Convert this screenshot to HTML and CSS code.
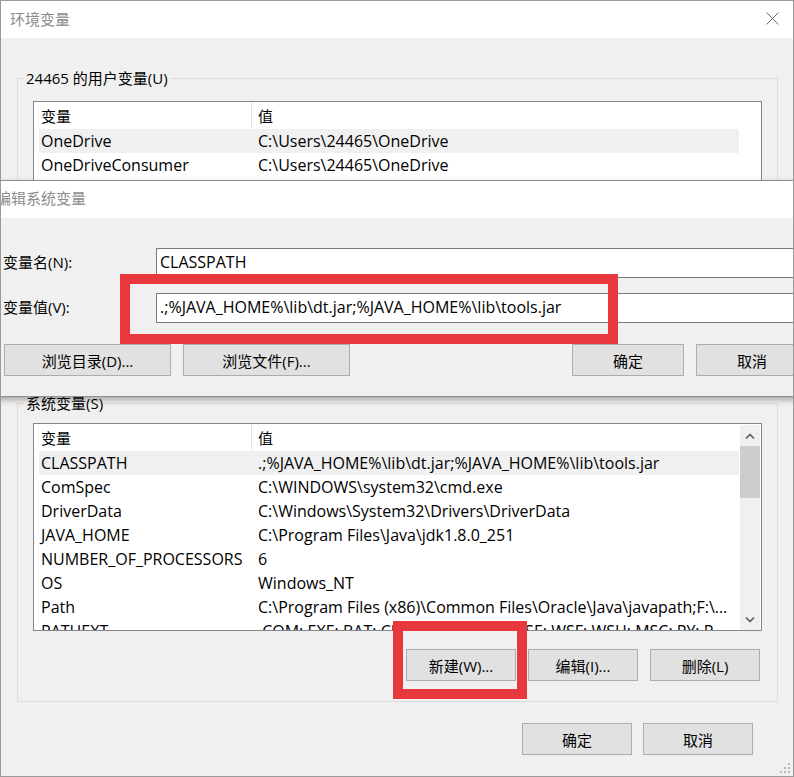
FILE: index.html
```html
<!DOCTYPE html>
<html lang="zh-CN">
<head>
    <meta charset="UTF-8">
    <title>环境变量</title>
    <link rel="stylesheet" href="styles.css">
</head>
<body>
    <div class="env-window">
        <!--标题栏-->
        <div class="title-bar">
            <span class="title">环境变量</span>
            <svg class="close-btn" width="13" height="13" viewBox="0 0 13 13">
                <path d="M0.5 0.5 L12.5 12.5 M12.5 0.5 L0.5 12.5" stroke="#6a6a6a" stroke-width="1" fill="none"/>
            </svg>
        </div>

        <div class="env-body">
            <!--用户变量-->
            <fieldset class="group user-group">
                <legend>24465 的用户变量(U)</legend>
                <div class="var-list user-list">
                    <div class="list-body">
                        <div class="list-head">
                            <span class="col-name">变量</span>
                            <span class="col-value">值</span>
                        </div>
                        <div class="list-row selected">
                            <span class="col-name">OneDrive</span>
                            <span class="col-value">C:\Users\24465\OneDrive</span>
                        </div>
                        <div class="list-row">
                            <span class="col-name">OneDriveConsumer</span>
                            <span class="col-value">C:\Users\24465\OneDrive</span>
                        </div>
                        <div class="list-row">
                            <span class="col-name">Path</span>
                            <span class="col-value">C:\Users\24465\AppData\Local\Microsoft\WindowsApps;</span>
                        </div>
                        <div class="list-row">
                            <span class="col-name">TEMP</span>
                            <span class="col-value">C:\Users\24465\AppData\Local\Temp</span>
                        </div>
                        <div class="list-row">
                            <span class="col-name">TMP</span>
                            <span class="col-value">C:\Users\24465\AppData\Local\Temp</span>
                        </div>
                    </div>
                </div>
                <div class="group-actions">
                    <button class="btn">新建(N)...</button>
                    <button class="btn">编辑(E)...</button>
                    <button class="btn">删除(D)</button>
                </div>
            </fieldset>

            <!--系统变量-->
            <fieldset class="group sys-group">
                <legend>系统变量(S)</legend>
                <div class="var-list sys-list">
                    <div class="list-body">
                        <div class="list-head">
                            <span class="col-name">变量</span>
                            <span class="col-value">值</span>
                        </div>
                        <div class="list-row selected">
                            <span class="col-name">CLASSPATH</span>
                            <span class="col-value">.;%JAVA_HOME%\lib\dt.jar;%JAVA_HOME%\lib\tools.jar</span>
                        </div>
                        <div class="list-row">
                            <span class="col-name">ComSpec</span>
                            <span class="col-value">C:\WINDOWS\system32\cmd.exe</span>
                        </div>
                        <div class="list-row">
                            <span class="col-name">DriverData</span>
                            <span class="col-value">C:\Windows\System32\Drivers\DriverData</span>
                        </div>
                        <div class="list-row">
                            <span class="col-name">JAVA_HOME</span>
                            <span class="col-value">C:\Program Files\Java\jdk1.8.0_251</span>
                        </div>
                        <div class="list-row">
                            <span class="col-name">NUMBER_OF_PROCESSORS</span>
                            <span class="col-value">6</span>
                        </div>
                        <div class="list-row">
                            <span class="col-name">OS</span>
                            <span class="col-value">Windows_NT</span>
                        </div>
                        <div class="list-row">
                            <span class="col-name">Path</span>
                            <span class="col-value">C:\Program Files (x86)\Common Files\Oracle\Java\javapath;F:\Python39\Scripts\</span>
                        </div>
                        <div class="list-row">
                            <span class="col-name">PATHEXT</span>
                            <span class="col-value">.COM;.EXE;.BAT;.CMD;.VBS;.VBE;.JS;.JSE;.WSF;.WSH;.MSC;.PY;.PYW</span>
                        </div>
                    </div>
                    <!--滚动条-->
                    <div class="scrollbar">
                        <span class="scroll-arrow">
                            <svg width="10" height="6" viewBox="0 0 10 6"><path d="M1 5.5 L5 1.5 L9 5.5" stroke="#606060" stroke-width="1.6" fill="none"/></svg>
                        </span>
                        <span class="scroll-thumb"></span>
                        <span class="scroll-space"></span>
                        <span class="scroll-arrow">
                            <svg width="10" height="6" viewBox="0 0 10 6"><path d="M1 0.5 L5 4.5 L9 0.5" stroke="#606060" stroke-width="1.6" fill="none"/></svg>
                        </span>
                    </div>
                </div>
                <div class="group-actions">
                    <button class="btn">新建(W)...</button>
                    <button class="btn">编辑(I)...</button>
                    <button class="btn">删除(L)</button>
                </div>
            </fieldset>

            <div class="dialog-actions">
                <button class="btn">确定</button>
                <button class="btn">取消</button>
            </div>
        </div>

        <!--编辑系统变量 对话框-->
        <div class="edit-dialog">
            <div class="edit-title">编辑系统变量</div>
            <div class="edit-body">
                <div class="field-row">
                    <label class="field-label">变量名(N):</label>
                    <div class="field-input">CLASSPATH</div>
                </div>
                <div class="field-row">
                    <label class="field-label">变量值(V):</label>
                    <div class="field-input">.;%JAVA_HOME%\lib\dt.jar;%JAVA_HOME%\lib\tools.jar</div>
                </div>
                <div class="edit-actions">
                    <button class="btn wide">浏览目录(D)...</button>
                    <button class="btn wide">浏览文件(F)...</button>
                    <button class="btn ok-btn">确定</button>
                    <button class="btn">取消</button>
                </div>
            </div>
        </div>

        <!--红框标注-->
        <div class="mark mark-value"></div>
        <div class="mark mark-new"></div>

        <svg class="grip" width="10" height="10" viewBox="0 0 10 10">
            <rect x="8" y="0" width="2" height="2" fill="#b8b8b8"/>
            <rect x="4" y="4" width="2" height="2" fill="#b8b8b8"/>
            <rect x="8" y="4" width="2" height="2" fill="#b8b8b8"/>
            <rect x="0" y="8" width="2" height="2" fill="#b8b8b8"/>
            <rect x="4" y="8" width="2" height="2" fill="#b8b8b8"/>
            <rect x="8" y="8" width="2" height="2" fill="#b8b8b8"/>
        </svg>
    </div>
</body>
</html>
```

FILE: styles.css
```css
* {
    margin: 0;
    padding: 0;
    box-sizing: border-box;
}
body {
    width: 794px;
    height: 777px;
    overflow: hidden;
    background: #fff;
    color: #000;
    font-family: "Open Sans", "Noto Sans CJK SC", sans-serif;
    font-size: 15px;
}
button {
    font-family: inherit;
    font-size: 15px;
    color: #000;
}

.env-window {
    position: relative;
    width: 794px;
    height: 777px;
    border: 1px solid #9a9a9a;
    background: #f0f0f0;
    overflow: hidden;
}
.title-bar {
    display: flex;
    align-items: center;
    justify-content: space-between;
    height: 37px;
    padding: 0 14px 2px 9px;
    background: #fff;
}
.title {
    color: #8c8c8c;
    font-family: "Noto Sans CJK SC", sans-serif;
}

.env-body {
    padding: 0 15px 0 16px;
}
.group {
    border: 1px solid #dcdcdc;
    padding: 13px 15px 20px 15px;
}
.group legend {
    margin-left: -9px;
    padding: 0 2px;
    line-height: 20px;
}
.user-group {
    margin-top: 30px;
}
.sys-group {
    margin-top: 21px;
    padding-top: 10px;
}

/* 列表 */
.var-list {
    display: flex;
    border: 1px solid #828790;
    background: #fff;
}
.user-list {
    height: 200px;
}
.sys-list {
    height: 208px;
}
.list-body {
    width: 705px;
    padding-left: 5px;
    overflow: hidden;
}
.list-head,
.list-row {
    display: flex;
    white-space: nowrap;
}
.list-head {
    height: 27px;
    line-height: 27px;
    font-family: "Noto Sans CJK SC", sans-serif;
}
.list-row {
    height: 24px;
    line-height: 24px;
    font-size: 16px;
}
.list-row.selected {
    background: #f0f0f0;
}
.col-name {
    flex: none;
    width: 213px;
    padding-left: 2px;
}
.list-head .col-name {
    border-right: 1px solid #e5e5e5;
}
.col-value {
    flex: 1;
    padding-left: 6px;
    padding-right: 5px;
    overflow: hidden;
    text-overflow: ellipsis;
}

.scrollbar {
    display: flex;
    flex-direction: column;
    width: 20px;
    margin: 1px 0 0 1px;
    background: #f0f0f0;
}
.scroll-arrow {
    display: flex;
    align-items: center;
    justify-content: center;
    height: 21px;
}
.scroll-thumb {
    height: 52px;
    background: #cdcdcd;
}
.scroll-space {
    flex: 1;
}

/* 按钮 */
.btn {
    width: 110px;
    height: 32px;
    border: 1px solid #adadad;
    background: #e1e1e1;
}
.group-actions {
    display: flex;
    justify-content: flex-end;
    gap: 12px;
    margin-top: 18px;
    padding-right: 2px;
}
.dialog-actions {
    display: flex;
    justify-content: flex-end;
    gap: 11px;
    margin: 21px 25px 0 0;
}

/* 编辑系统变量 */
.edit-dialog {
    position: absolute;
    left: -21px;
    top: 179px;
    width: 850px;
    height: 217px;
    border: 1px solid #8f8f8f;
    background: #f0f0f0;
    box-shadow: 0 3px 6px rgba(0, 0, 0, 0.3);
}
.edit-title {
    height: 37px;
    line-height: 34px;
    padding-left: 15px;
    background: #fff;
    color: #8c8c8c;
    font-family: "Noto Sans CJK SC", sans-serif;
}
.edit-body {
    padding: 30px 21px 0 22px;
}
.field-row {
    display: flex;
    align-items: center;
    margin-bottom: 15px;
}
.field-label {
    width: 153px;
    padding-bottom: 3px;
}
.field-input {
    flex: 1;
    height: 30px;
    line-height: 27px;
    padding-left: 3px;
    border: 1px solid #7a7a7a;
    background: #fff;
    font-size: 16px;
    white-space: nowrap;
}
.edit-actions {
    display: flex;
    gap: 12px;
    margin-top: 21px;
    padding-left: 1px;
}
.edit-actions .btn {
    width: 112px;
}
.edit-actions .wide {
    width: 167px;
}
.edit-actions .ok-btn {
    margin-left: auto;
}

/* 标注 */
.mark {
    position: absolute;
    border: 10px solid #e8383d;
}
.mark-value {
    left: 119px;
    top: 273px;
    width: 498px;
    height: 70px;
}
.mark-new {
    left: 392px;
    top: 620px;
    width: 134px;
    height: 78px;
}
.grip {
    position: absolute;
    right: 3px;
    bottom: 3px;
}
```
